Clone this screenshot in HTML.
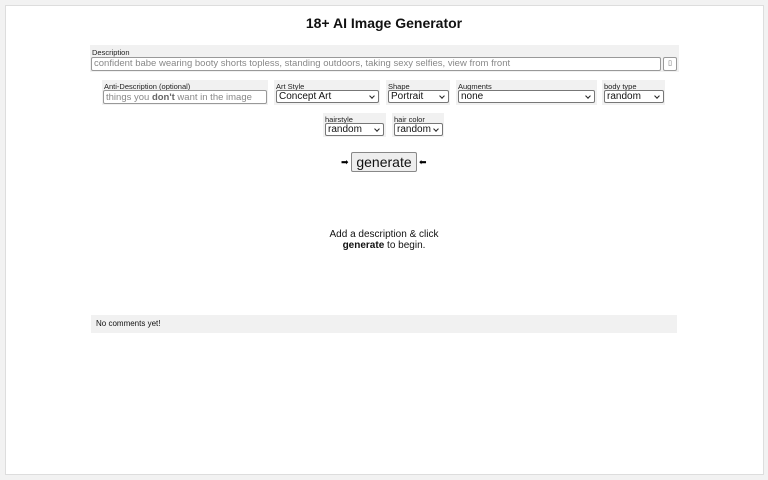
<!DOCTYPE html>
<html><head><style>
body{margin:0;width:768px;height:480px;background:#f2f2f2;font-family:"Liberation Sans",Arial,sans-serif;position:relative;overflow:hidden}
.panel{position:absolute;left:5px;top:5px;width:757px;height:468px;background:#fff;border:1px solid #ddd}
.a{position:absolute}
.g{position:absolute;background:#f1f1f1}
.lbl{position:absolute;font-size:7.5px;color:#222;left:2px;top:2px;white-space:nowrap}
.inp{position:absolute;border:1px solid #999;background:#fff;border-radius:2px;font-size:9.5px;color:#888;box-sizing:border-box;padding:0 2px;white-space:nowrap;overflow:hidden;line-height:12px}
.sel{position:absolute;border:1px solid #777;background:#fff;border-radius:2px;font-size:10px;color:#111;box-sizing:border-box;padding:0 2px;line-height:12px;white-space:nowrap}
.sel:after{content:"";position:absolute;right:4px;top:3px;width:3px;height:3px;border-right:1.2px solid #222;border-bottom:1.2px solid #222;transform:rotate(45deg)}
</style></head><body>
<div class="panel"></div>
<div class="a" style="left:0;width:768px;top:15px;text-align:center;font-size:14px;font-weight:bold;color:#111">18+ AI Image Generator</div>

<div class="g" style="left:90px;top:45px;width:589px;height:27px">
<div class="lbl" style="top:3px">Description</div>
<div class="inp" style="left:1px;top:12px;width:570px;height:14px">confident babe wearing booty shorts topless, standing outdoors, taking sexy selfies, view from front</div>
<div class="inp" style="left:573px;top:12px;width:14px;height:14px;font-size:7px;text-align:center;color:#666">▯</div>
</div>

<div class="g" style="left:102px;top:80px;width:166px;height:25px"><div class="lbl">Anti-Description (optional)</div>
<div class="inp" style="left:1px;top:10px;width:164px;height:14px;line-height:13px">things you <b style="color:#666">don't</b> want in the image</div></div>
<div class="g" style="left:274px;top:80px;width:106px;height:25px"><div class="lbl">Art Style</div>
<div class="sel" style="left:2px;top:10px;width:103px;height:13px">Concept Art</div></div>
<div class="g" style="left:386px;top:80px;width:64px;height:25px"><div class="lbl">Shape</div>
<div class="sel" style="left:2px;top:10px;width:61px;height:13px">Portrait</div></div>
<div class="g" style="left:456px;top:80px;width:141px;height:25px"><div class="lbl">Augments</div>
<div class="sel" style="left:2px;top:10px;width:137px;height:13px">none</div></div>
<div class="g" style="left:602px;top:80px;width:63px;height:25px"><div class="lbl">body type</div>
<div class="sel" style="left:2px;top:10px;width:60px;height:13px">random</div></div>

<div class="g" style="left:323px;top:113px;width:63px;height:24px"><div class="lbl">hairstyle</div>
<div class="sel" style="left:2px;top:10px;width:59px;height:13px">random</div></div>
<div class="g" style="left:392px;top:113px;width:52px;height:24px"><div class="lbl">hair color</div>
<div class="sel" style="left:2px;top:10px;width:49px;height:13px">random</div></div>

<div class="a" style="left:341px;top:157px;font-size:9px">➡</div>
<div class="a" style="left:351px;top:152px;width:66px;height:20px;box-sizing:border-box;border:1px solid #888;border-radius:2px;background:#eee;font-size:14px;text-align:center;line-height:19px;color:#111">generate</div>
<div class="a" style="left:419px;top:157px;font-size:9px">⬅</div>

<div class="a" style="left:0;width:768px;top:229px;text-align:center;font-size:10px;line-height:11px;color:#111">Add a description &amp; click<br><b>generate</b> to begin.</div>

<div class="g" style="left:91px;top:315px;width:586px;height:18px"><div class="a" style="left:5px;top:4px;font-size:8px;color:#111">No comments yet!</div></div>
</body></html>
